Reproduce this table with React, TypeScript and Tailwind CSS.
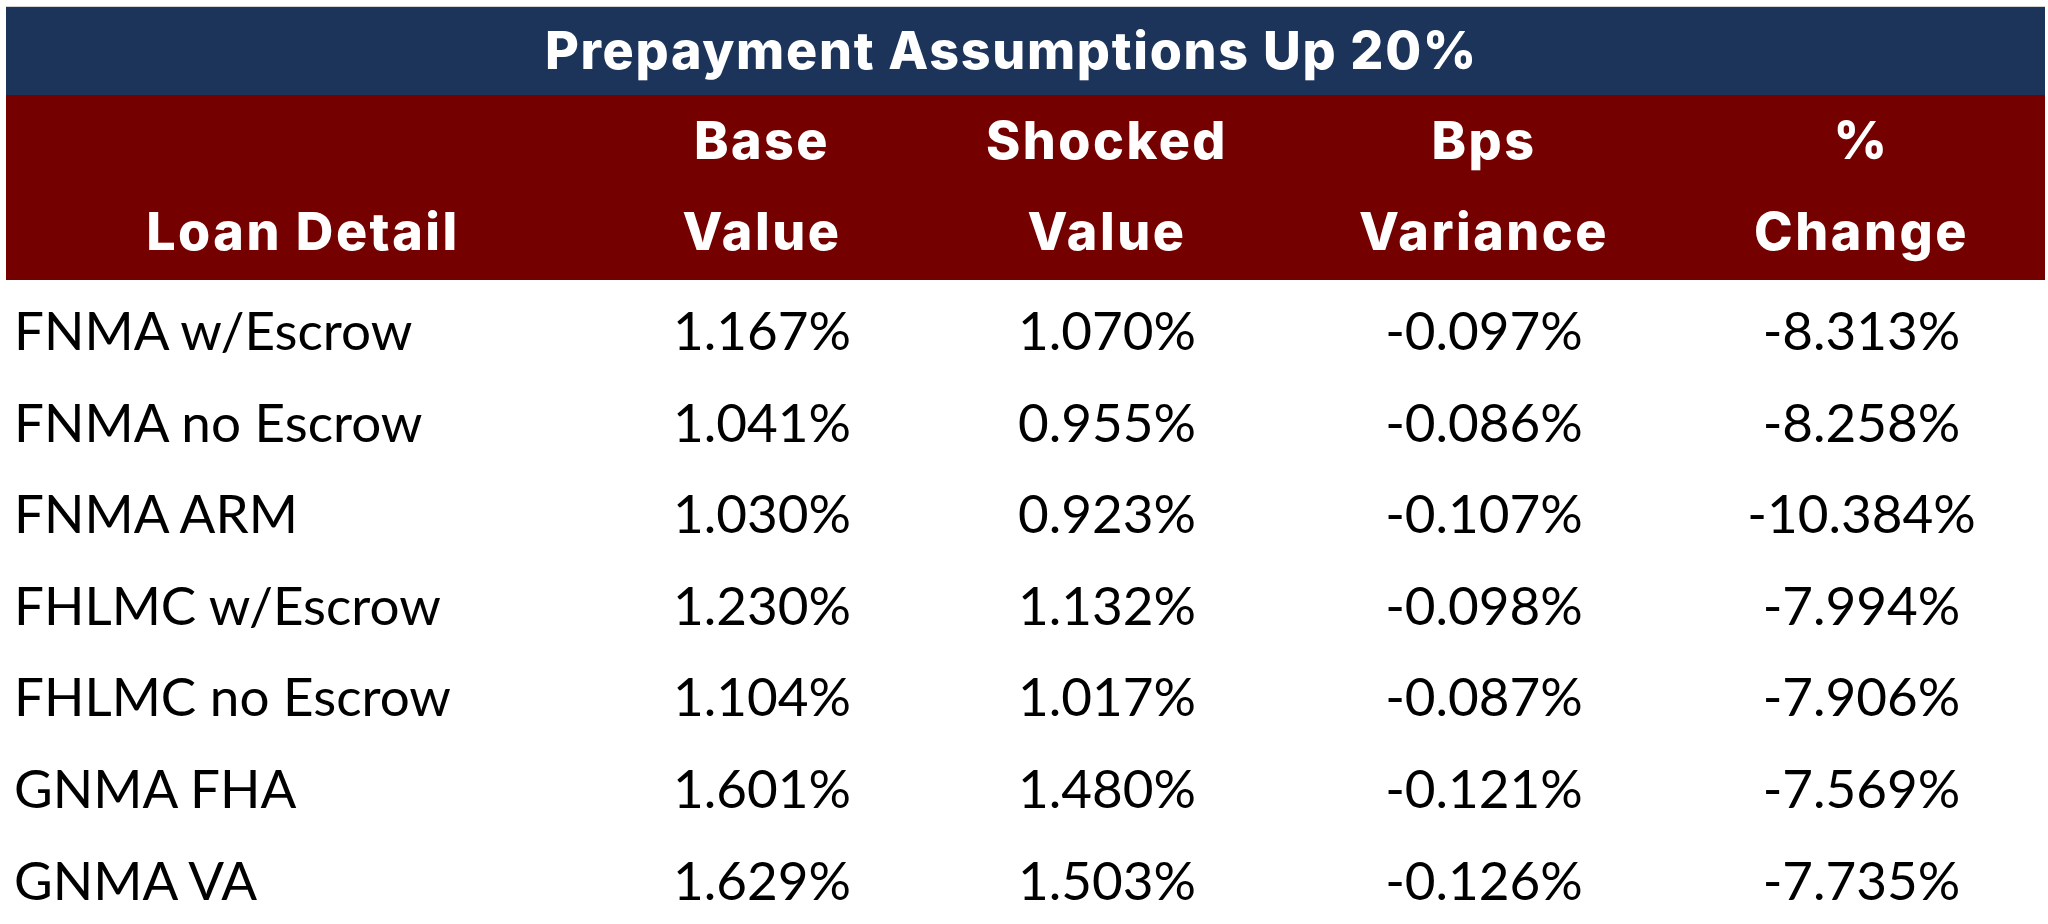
const rows = [
  ["FNMA w/Escrow", "1.167%", "1.070%", "-0.097%", "-8.313%"],
  ["FNMA no Escrow", "1.041%", "0.955%", "-0.086%", "-8.258%"],
  ["FNMA ARM", "1.030%", "0.923%", "-0.107%", "-10.384%"],
  ["FHLMC w/Escrow", "1.230%", "1.132%", "-0.098%", "-7.994%"],
  ["FHLMC no Escrow", "1.104%", "1.017%", "-0.087%", "-7.906%"],
  ["GNMA FHA", "1.601%", "1.480%", "-0.121%", "-7.569%"],
  ["GNMA VA", "1.629%", "1.503%", "-0.126%", "-7.735%"],
];

const headers = [
  ["", "Loan Detail"],
  ["Base", "Value"],
  ["Shocked", "Value"],
  ["Bps", "Variance"],
  ["%", "Change"],
];

const cols = "grid grid-cols-[594px_324px_366px_388px_367px]";

export default function App() {
  return (
    <div className="w-[2048px] h-[924px] overflow-hidden bg-white pl-[6px] pt-[6px]">
      <div className="w-[2039px] border-t border-[#d4d4d4]">
        {/* title band */}
        <div className="h-[88px] pr-[28px] bg-[#1c335a] flex items-center justify-center font-['Inter',sans-serif] font-extrabold text-white text-[52px] tracking-[1.7px]">
          Prepayment Assumptions Up 20%
        </div>

        {/* column headings */}
        <div className={`${cols} h-[185px] bg-[#740000] overflow-hidden font-['Inter',sans-serif] font-extrabold text-white text-[52px] tracking-[2.5px]`}>
          {headers.map(([top, bottom], i) => (
            <div key={i} className="flex flex-col text-center">
              <div className="h-[91px] leading-[91px]">{top || "\u00a0"}</div>
              <div className="h-[91px] leading-[91px]">{bottom}</div>
            </div>
          ))}
        </div>

        {/* data rows */}
        <div className="pt-[4px] font-['Lato',sans-serif] text-black text-[53px]">
          {rows.map((r, i) => (
            <div key={i} className={`${cols} h-[91.6px] leading-[92px]`}>
              <div className="pl-[8px]">{r[0]}</div>
              <div className="text-center">{r[1]}</div>
              <div className="text-center">{r[2]}</div>
              <div className="text-center">{r[3]}</div>
              <div className="text-center">{r[4]}</div>
            </div>
          ))}
        </div>
      </div>
    </div>
  );
}
